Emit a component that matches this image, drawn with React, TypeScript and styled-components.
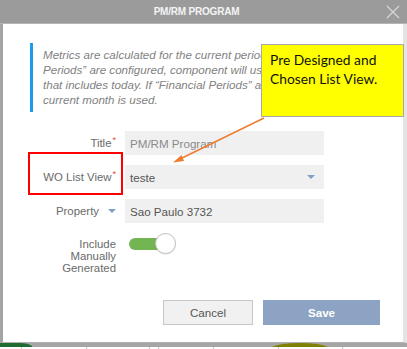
import React from "react";
import styled, { createGlobalStyle } from "styled-components";

const Global = createGlobalStyle`
  html, body { margin: 0; padding: 0; background: #ffffff; }
  body { font-family: "Liberation Sans", Arial, sans-serif; }
  * { box-sizing: border-box; }
`;

const Screen = styled.div`
  position: relative;
  width: 407px;
  height: 349px;
  overflow: hidden;
  display: flex;
  flex-direction: column;
  background: #ffffff;
`;

const Header = styled.div`
  height: 24px;
  flex: none;
  background: #9b9b9b;
  border-bottom: 1px solid #b4b4b4;
  display: flex;
  align-items: center;
  justify-content: center;
  position: relative;
  padding-right: 14px;
`;

const HeaderTitle = styled.div`
  font-family: "Liberation Sans", Arial, sans-serif;
  font-weight: bold;
  font-size: 10px;
  color: #f4f4f4;
  letter-spacing: -0.2px;
`;

const CloseButton = styled.div`
  position: absolute;
  right: 7px;
  top: 5px;
  width: 14px;
  height: 14px;
  display: flex;
`;

const Body = styled.div`
  flex: 1;
  display: flex;
  flex-direction: column;
  background: #ffffff;
  border-left: 3px solid #a3a3a3;
  border-right: 4px solid #e4e4e4;
  border-bottom: 1px solid #b0b0b0;
  padding: 19px 23px 17px 27px;
`;

const InfoBox = styled.div`
  border-left: 3px solid #1c9be8;
  padding: 4px 0 5px 10px;
  font-family: "Liberation Sans", Arial, sans-serif;
  font-style: italic;
  font-size: 11.6px;
  line-height: 15px;
  color: #7f7f7f;
  white-space: nowrap;
  width: 350px;
`;

const Form = styled.div`
  margin-top: 19px;
  display: grid;
  grid-template-columns: 86px 199px;
  column-gap: 9px;
  row-gap: 10px;
`;

const Label = styled.div<{ $multi?: boolean }>`
  font-family: "Liberation Sans", Arial, sans-serif;
  font-size: 11.4px;
  color: #6a6a6a;
  text-align: right;
  display: flex;
  align-items: ${(p) => (p.$multi ? "flex-start" : "center")};
  justify-content: flex-end;
  line-height: ${(p) => (p.$multi ? "12px" : "24px")};
  padding-top: ${(p) => (p.$multi ? "5px" : "0")};
`;

const Required = styled.span`
  color: #e0453f;
  font-size: 9px;
  align-self: flex-start;
  line-height: 18px;
  margin-left: 1px;
`;

const Caret = styled.span<{ $ml?: number }>`
  display: inline-block;
  width: 0;
  height: 0;
  border-left: 4px solid transparent;
  border-right: 4px solid transparent;
  border-top: 4px solid #7d9fc9;
  margin-left: ${(p) => p.$ml ?? 0}px;
`;

const Input = styled.div<{ $dark?: boolean }>`
  height: 24px;
  background: #f0f0f0;
  display: flex;
  align-items: center;
  justify-content: space-between;
  padding: 0 9px 0 5px;
  font-family: "Liberation Sans", Arial, sans-serif;
  font-size: 11.6px;
  color: ${(p) => (p.$dark ? "#555555" : "#8a8a8a")};
`;

const ToggleCell = styled.div`
  display: flex;
  align-items: flex-start;
  padding-left: 4px;
  height: 42px;
`;

const Track = styled.div`
  position: relative;
  width: 47px;
  height: 21px;
  display: flex;
  align-items: center;
`;

const TrackFill = styled.div`
  width: 42px;
  height: 12px;
  border-radius: 6px;
  background: #72b552;
`;

const Knob = styled.div`
  position: absolute;
  right: 0;
  top: 0;
  width: 21px;
  height: 21px;
  border-radius: 50%;
  background: #ffffff;
  border: 1px solid #bdbdbd;
  box-shadow: 0 1px 1px rgba(0, 0, 0, 0.08);
`;

const Footer = styled.div`
  margin-top: auto;
  display: flex;
  justify-content: flex-end;
  gap: 10px;
`;

const Button = styled.button<{ $primary?: boolean }>`
  height: 25px;
  width: ${(p) => (p.$primary ? "117px" : "90px")};
  font-family: "Liberation Sans", Arial, sans-serif;
  font-size: 11.6px;
  font-weight: ${(p) => (p.$primary ? "bold" : "normal")};
  color: ${(p) => (p.$primary ? "#ffffff" : "#555555")};
  background: ${(p) => (p.$primary ? "#8da3c3" : "#f1f1f1")};
  border: 1px solid ${(p) => (p.$primary ? "#8da3c3" : "#c6c6c6")};
  padding: 0;
`;

const BottomStrip = styled.div`
  height: 6px;
  flex: none;
  display: flex;
`;

const Callout = styled.div`
  position: absolute;
  left: 261px;
  top: 44px;
  width: 143px;
  height: 73px;
  background: #ffff00;
  border: 1px solid #a8a8a8;
  padding: 5px 0 0 8px;
  font-family: Lato, "Open Sans", sans-serif;
  font-size: 13.8px;
  line-height: 19px;
  color: #111111;
`;

const Highlight = styled.div`
  position: absolute;
  left: 28px;
  top: 152px;
  width: 95px;
  height: 43px;
  border: 2px solid #ff0000;
`;

const ArrowLayer = styled.svg`
  position: absolute;
  left: 0;
  top: 0;
  pointer-events: none;
`;

export default function App() {
  return (
    <>
      <Global />
      <Screen>
        <Header>
          <HeaderTitle>PM/RM PROGRAM</HeaderTitle>
          <CloseButton>
            <svg width="14" height="14" viewBox="0 0 14 14">
              <path d="M1 1 L13 13 M13 1 L1 13" stroke="#d6d6d6" strokeWidth="1.3" fill="none" />
            </svg>
          </CloseButton>
        </Header>
        <Body>
          <InfoBox>
            Metrics are calculated for the current period. If “Financial
            <br />
            Periods” are configured, component will use the period
            <br />
            that includes today. If “Financial Periods” are not configured,
            <br />
            current month is used.
          </InfoBox>
          <Form>
            <Label>
              Title<Required>*</Required>
            </Label>
            <Input>PM/RM Program</Input>
            <Label>
              WO List View<Required>*</Required>
            </Label>
            <Input $dark>
              teste
              <Caret />
            </Input>
            <Label>
              Property
              <Caret $ml={9} />
            </Label>
            <Input $dark>Sao Paulo 3732</Input>
            <Label $multi>
              Include
              <br />
              Manually
              <br />
              Generated
            </Label>
            <ToggleCell>
              <Track>
                <TrackFill />
                <Knob />
              </Track>
            </ToggleCell>
          </Form>
          <Footer>
            <Button>Cancel</Button>
            <Button $primary>Save</Button>
          </Footer>
        </Body>
        <BottomStrip>
          <svg width="407" height="6" viewBox="0 0 407 6">
            <rect x="0" y="0" width="407" height="4" fill="#a6a6a6" />
            <rect x="0" y="4" width="407" height="2" fill="#ffffff" />
            <path d="M0 0 H20 Q28 0 32 3 V4 H0 Z" fill="#1f6b30" />
            <path d="M272 4 Q280 0 300 0 Q320 0 328 4 Z" fill="#808000" />
            {[21, 86, 149, 158, 213, 278, 342].map((x) => (
              <rect key={x} x={x} y="4" width="1" height="2" fill="#c8c8c8" />
            ))}
          </svg>
        </BottomStrip>
        <Highlight />
        <Callout>
          Pre Designed and
          <br />
          Chosen List View.
        </Callout>
        <ArrowLayer width="407" height="349" viewBox="0 0 407 349">
          <line x1="264" y1="118" x2="180" y2="159" stroke="#ed7d31" strokeWidth="1.6" />
          <path d="M173 162.5 L181.5 155 L184 161 Z" fill="#ed7d31" />
        </ArrowLayer>
      </Screen>
    </>
  );
}
